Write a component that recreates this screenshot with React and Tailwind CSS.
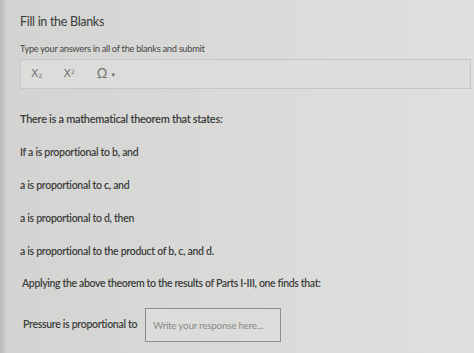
export default function App() {
  const lines = [
    'If a is proportional to b, and',
    'a is proportional to c, and',
    'a is proportional to d, then',
    'a is proportional to the product of b, c, and d.',
  ]
  return (
    <div className="flex h-[353px] w-[474px] overflow-hidden bg-gradient-to-r from-[#d3d4d1] via-[#dadbd8] to-[#dfe0dd] text-[#3b3c3b]" style={{ fontFamily: 'Lato, "Open Sans", sans-serif' }}>
      <div className="w-[6px] shrink-0 bg-gradient-to-r from-[#b9bab7] to-[#cfd0cd]" />
      <div className="flex-1 pl-[14px] pr-[3px]">
        <h1 className="pt-[14px] text-[12.5px] leading-4 tracking-[-0.3px]">Fill in the Blanks</h1>
        <p className="mt-[13px] text-[9.3px] leading-3 tracking-[-0.3px] text-[#474847]">Type your answers in all of the blanks and submit</p>
        <div className="mt-[4px] flex h-[30px] items-center gap-[19px] border border-[#c6c7c4] bg-[#dcddda] pl-[10px] text-[11px] text-[#707170]">
          <span className="font-['DejaVu_Sans']">X<sub className="text-[6px]">2</sub></span>
          <span className="ml-[2px] font-['DejaVu_Sans']">X<sup className="text-[6px]">2</sup></span>
          <span className="ml-[3px] flex items-center gap-[3px] text-[13px]">Ω<span className="text-[6px]">▼</span></span>
        </div>
        <div className="font-semibold tracking-[-0.3px]">
          <p className="mt-[24px] text-[11px] leading-3">There is a mathematical theorem that states:</p>
          {lines.map((l, i) => (
            <p key={i} className="mt-[21px] text-[10.5px] leading-3">{l}</p>
          ))}
          <p className="ml-[2px] mt-[20px] text-[10.5px] leading-3 tracking-[-0.35px]">Applying the above theorem to the results of Parts I-III, one finds that:</p>
          <div className="ml-[3px] mt-[19px] flex items-center">
            <span className="w-[122px] text-[10.5px]">Pressure is proportional to</span>
            <div className="flex h-[34px] w-[136px] items-center border border-[#8e8f8d] bg-[#dcddda] pl-[7px] text-[10px] font-normal tracking-[-0.3px] text-[#8a8b89]">Write your response here...</div>
          </div>
        </div>
      </div>
    </div>
  )
}
